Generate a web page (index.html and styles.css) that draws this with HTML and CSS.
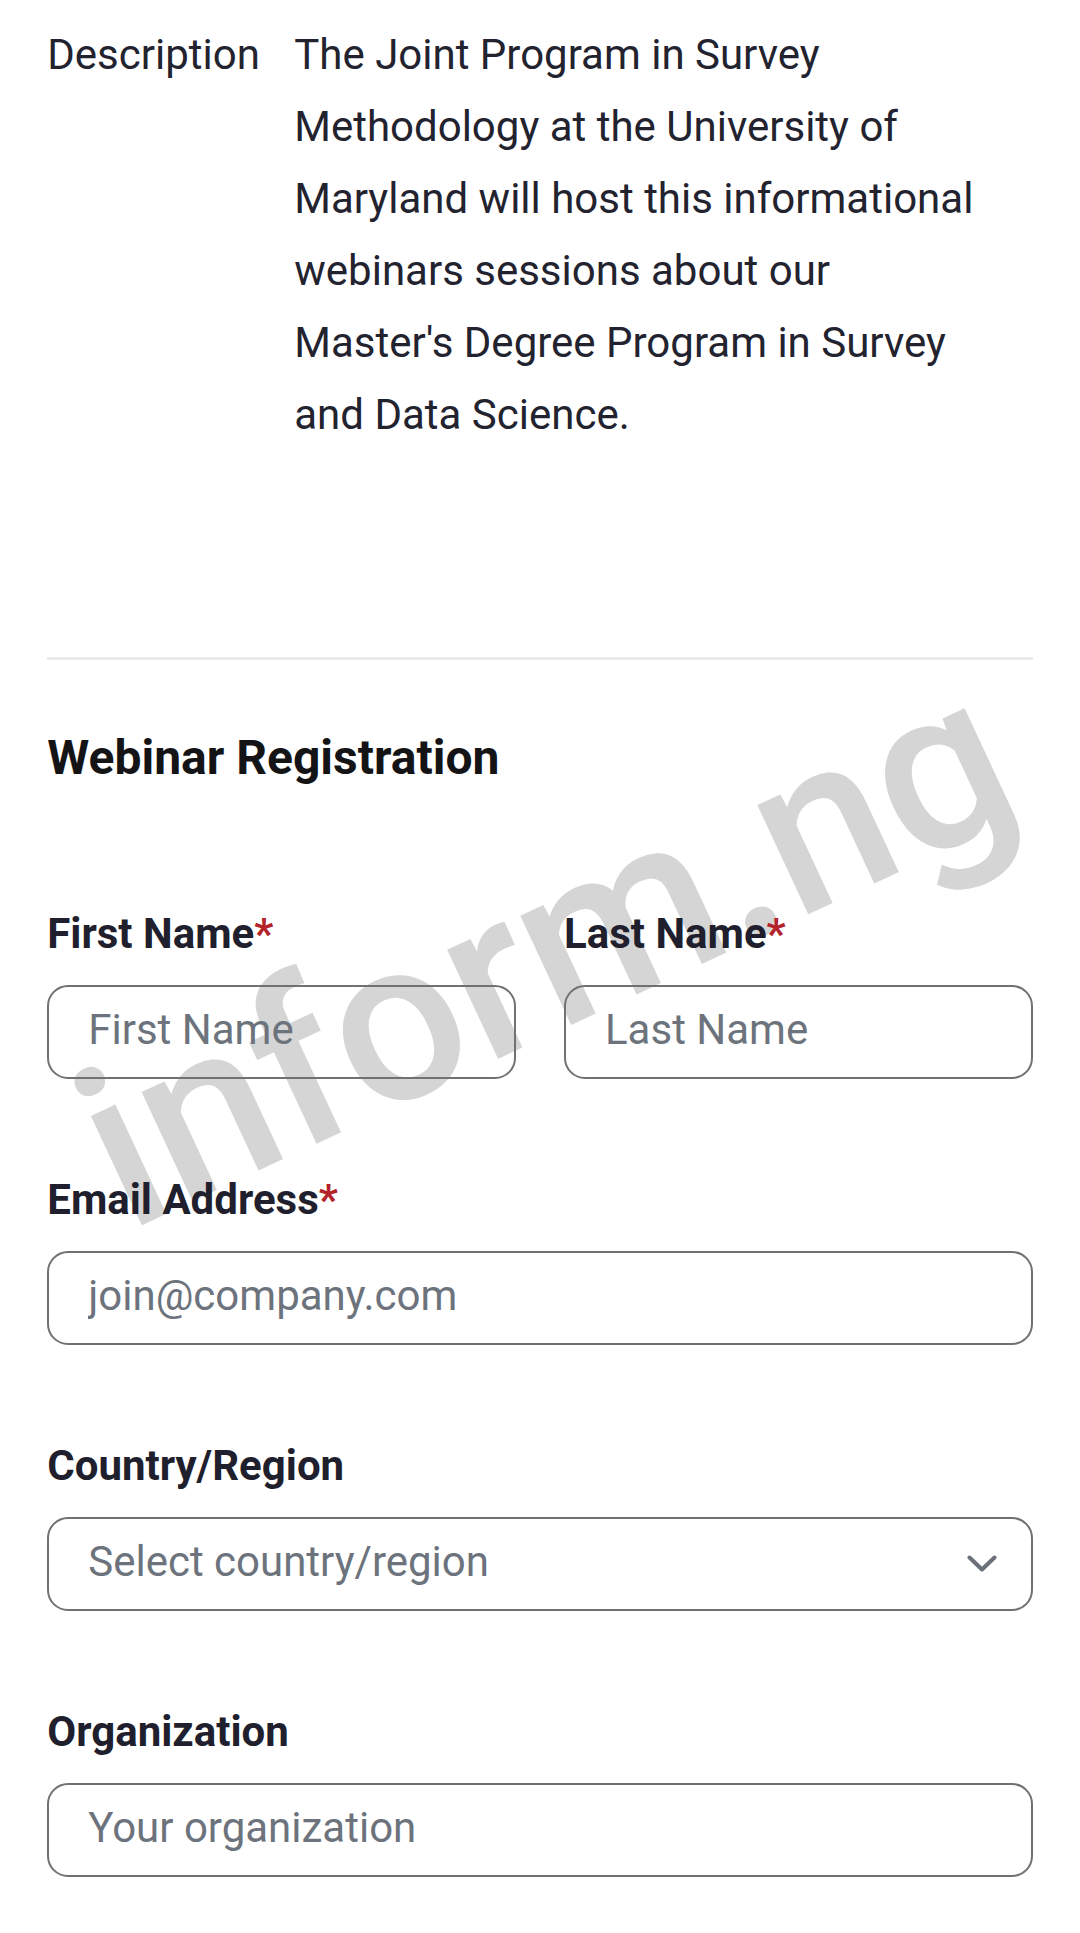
FILE: index.html
```html
<!DOCTYPE html>
<html lang="en">
<head>
<meta charset="utf-8">
<title>Webinar Registration</title>
<link rel="stylesheet" href="styles.css">
</head>
<body>
<div class="watermark">inform.ng</div>
<main class="page">
  <div class="detail-row">
    <div class="detail-label">Description</div>
    <div class="detail-value">The Joint Program in Survey Methodology at the University of Maryland will host this informational webinars sessions about our Master's Degree Program in Survey and Data Science.</div>
  </div>
  <hr class="divider">
  <h2 class="form-title">Webinar Registration</h2>
  <form class="form">
    <div class="row two">
      <div class="field">
        <label class="label" for="fn">First Name<span class="req">*</span></label>
        <input class="input" id="fn" type="text" placeholder="First Name">
      </div>
      <div class="field">
        <label class="label" for="ln">Last Name<span class="req">*</span></label>
        <input class="input" id="ln" type="text" placeholder="Last Name">
      </div>
    </div>
    <div class="row">
      <div class="field">
        <label class="label" for="em">Email Address<span class="req">*</span></label>
        <input class="input" id="em" type="email" placeholder="join@company.com">
      </div>
    </div>
    <div class="row">
      <div class="field">
        <label class="label" for="cr">Country/Region</label>
        <div class="select-wrap">
          <select class="input select" id="cr">
            <option selected>Select country/region</option>
          </select>
          <svg class="chevron" width="30" height="18" viewBox="0 0 30 18" aria-hidden="true"><path d="M2.5 2.5 L15 14.5 L27.5 2.5" fill="none" stroke="#6b7079" stroke-width="4" stroke-linecap="round" stroke-linejoin="round"/></svg>
        </div>
      </div>
    </div>
    <div class="row">
      <div class="field">
        <label class="label" for="org">Organization</label>
        <input class="input" id="org" type="text" placeholder="Your organization">
      </div>
    </div>
  </form>
</main>
</body>
</html>
```

FILE: styles.css
```css
html, body {
  margin: 0;
  padding: 0;
  background: #ffffff;
}
body {
  font-family: Roboto, "Liberation Sans", Arial, sans-serif;
  color: #22222e;
  position: relative;
  min-height: 1933px;
  overflow: hidden;
}
.watermark {
  position: absolute;
  left: 545px;
  top: 951px;
  transform: translate(-50%, -50%) rotate(-25deg);
  font-family: Roboto, "Liberation Sans", sans-serif;
  font-size: 228px;
  font-weight: 500;
  line-height: 1;
  color: #d5d5d5;
  white-space: nowrap;
  z-index: 0;
  pointer-events: none;
}
.page {
  position: relative;
  z-index: 1;
  padding: 19px 47.25px 0;
}
.detail-row {
  display: grid;
  grid-template-columns: 247px 1fr;
  font-size: 42px;
  line-height: 72px;
  color: #23232f;
}
.detail-value {
  padding-right: 42px;
}
.divider {
  margin: 206px 0 0;
  border: 0;
  height: 3px;
  background: #ebebee;
}
.form-title {
  margin: 66px 0 0;
  font-size: 48px;
  line-height: 63px;
  font-weight: 700;
  color: #141417;
}
.form {
  margin-top: 113px;
  display: flex;
  flex-direction: column;
  gap: 89px;
}
.row {
  display: grid;
  grid-template-columns: 1fr;
}
.row.two {
  grid-template-columns: 1fr 1fr;
  column-gap: 48px;
}
.field {
  display: flex;
  flex-direction: column;
}
.label {
  font-size: 42px;
  line-height: 63px;
  font-weight: 700;
  color: #1f1f2d;
  margin-bottom: 20px;
}
.req {
  color: #b4232a;
}
.input {
  box-sizing: border-box;
  width: 100%;
  height: 94px;
  margin: 0;
  padding: 0 39px 5px;
  border: 2.75px solid #707173;
  border-radius: 21px;
  background: transparent;
  font-family: Roboto, "Liberation Sans", sans-serif;
  font-size: 42px;
  color: #22222e;
  outline: none;
}
.input::placeholder {
  color: #6c737c;
  opacity: 1;
}
.select-wrap {
  position: relative;
}
.select {
  appearance: none;
  -webkit-appearance: none;
  color: #6c737c;
}
.chevron {
  position: absolute;
  right: 36px;
  top: 38px;
  pointer-events: none;
}
```
